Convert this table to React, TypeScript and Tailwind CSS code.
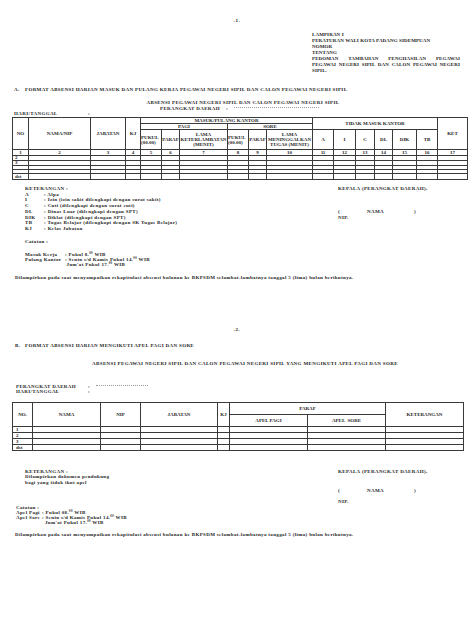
const cell = "border border-[#3a3a3a] p-0 text-center align-middle leading-[5px]";
const thin = "border border-[#3a3a3a] p-0 text-center align-middle leading-[4px]";

const colsA = [16, 62, 35, 15, 21, 18, 48, 21, 18, 46, 21, 22, 19, 18, 24, 21, 30];
const colsB = [20, 68, 40, 77, 12, 78, 78, 78];

const Dots = ({ w }: { w: string }) => (
  <span className={`${w} ml-[6px] inline-block translate-y-[-1px] border-b border-dotted border-[#9a9a9a]`} />
);

const Sup = () => <sup className="text-[3px]">00</sup>;

const TableA = () => (
  <table className="ml-[12px] table-fixed border-collapse border border-[#3a3a3a] tracking-normal">
    <colgroup>
      {colsA.map((w, i) => (
        <col key={i} style={{ width: w }} />
      ))}
    </colgroup>
    <tbody>
      <tr className="h-[6px]">
        <td rowSpan={3} className={cell}>NO</td>
        <td rowSpan={3} className={cell}>NAMA/NIP</td>
        <td rowSpan={3} className={cell}>JABATAN</td>
        <td rowSpan={3} className={cell}>KJ</td>
        <td colSpan={6} className={cell}>MASUK/PULANG KANTOR</td>
        <td colSpan={6} rowSpan={2} className={cell}>TIDAK MASUK KANTOR</td>
        <td rowSpan={3} className={cell}>KET</td>
      </tr>
      <tr className="h-[5px]">
        <td colSpan={3} className={cell}>PAGI</td>
        <td colSpan={3} className={cell}>SORE</td>
      </tr>
      <tr className="h-[20px]">
        <td className={`${cell} text-left`}>PUKUL<br />(00.00)</td>
        <td className={cell}>PARAF</td>
        <td className={cell}>LAMA<br />KETERLAMBATAN<br />(MENIT)</td>
        <td className={`${cell} text-left`}>PUKUL<br />(00.00)</td>
        <td className={cell}>PARAF</td>
        <td className={cell}>LAMA<br />MENINGGALKAN<br />TUGAS (MENIT)</td>
        {["A", "I", "C", "DL", "DIK", "TB"].map((t) => (
          <td key={t} className={cell}>{t}</td>
        ))}
      </tr>
      <tr className="h-[5px]">
        {colsA.map((_, i) => (
          <td key={i} className={cell}>{i + 1}</td>
        ))}
      </tr>
      {["2", "3", "", "", "dst"].map((n, r) => (
        <tr key={r} className={r === 4 ? "h-[6px]" : "h-[4px]"}>
          {colsA.map((_, i) => (
            <td key={i} className={`${thin} ${i === 0 ? "pl-[2px] text-left" : ""}`}>
              {i === 0 ? n : ""}
            </td>
          ))}
        </tr>
      ))}
    </tbody>
  </table>
);

const TableB = () => (
  <table className="ml-[12px] table-fixed border-collapse border border-[#3a3a3a] tracking-normal">
    <colgroup>
      {colsB.map((w, i) => (
        <col key={i} style={{ width: w }} />
      ))}
    </colgroup>
    <tbody>
      <tr className="h-[12px]">
        <td rowSpan={2} className={cell}>NO.</td>
        <td rowSpan={2} className={cell}>NAMA</td>
        <td rowSpan={2} className={cell}>NIP</td>
        <td rowSpan={2} className={cell}>JABATAN</td>
        <td rowSpan={2} className={cell}>KJ</td>
        <td colSpan={2} className={cell}>PARAF</td>
        <td rowSpan={2} className={cell}>KETERANGAN</td>
      </tr>
      <tr className="h-[12px]">
        <td className={cell}>APEL PAGI</td>
        <td className={cell}>APEL &nbsp;SORE</td>
      </tr>
      {["1", "2", "3", "dst"].map((n, r) => (
        <tr key={r} className={r === 3 ? "h-[6px]" : "h-[5px]"}>
          {colsB.map((_, i) => (
            <td key={i} className={`${cell} ${i === 0 ? "pl-[3px] text-left" : ""}`}>
              {i === 0 ? n : ""}
            </td>
          ))}
        </tr>
      ))}
    </tbody>
  </table>
);

const ketA = [
  ["A", "Alpa"],
  ["I", "Izin (izin sakit dilengkapi dengan surat sakit)"],
  ["C", "Cuti (dilengkapi dengan surat cuti)"],
  ["DL", "Dinas Luar (dilengkapi dengan SPT)"],
  ["DIK", "Diklat (dilengkapi dengan SPT)"],
  ["TB", "Tugas Belajar (dilengkapi dengan SK Tugas Belajar)"],
  ["KJ", "Kelas Jabatan"],
];

const Kepala = ({ gapNama, gapNip }: { gapNama: string; gapNip: string }) => (
  <div className="w-[110px] leading-[6px]">
    <div>KEPALA (PERANGKAT DAERAH),</div>
    <div className={`${gapNama} flex`}>
      <span className="w-[29px]">(</span>
      <span className="w-[47px]">NAMA</span>
      <span>)</span>
    </div>
    <div className={gapNip}>NIP.</div>
  </div>
);

const Footnote = ({ mt }: { mt: string }) => (
  <div className={`${mt} pl-[15px] leading-[6px]`}>
    Dilampirkan pada saat menyampaikan rekapitulasi absensi bulanan ke BKPSDM selambat-lambatnya tanggal 5 (lima) bulan berikutnya.
  </div>
);

export default function App() {
  return (
    <div className="h-[632px] w-[474px] overflow-hidden bg-white font-['Liberation_Serif',serif] text-[5px] font-bold tracking-[0.35px] text-[#1e1e1e]">
      {/* halaman 1 */}
      <div className="pt-[18px] text-center leading-[6px]">-1-</div>

      <div className="ml-[312px] mt-[8px] w-[148px] leading-[6px] tracking-[0.1px]">
        <div>LAMPIRAN I</div>
        <div>PERATURAN WALI KOTA PADANG SIDEMPUAN</div>
        <div>NOMOR</div>
        <div>TENTANG</div>
        <div className="text-justify [text-align-last:justify]">PEDOMAN TAMBAHAN PENGHASILAN PEGAWAI</div>
        <div className="whitespace-nowrap text-justify [text-align-last:justify]">PEGAWAI NEGERI SIPIL DAN CALON PEGAWAI NEGERI</div>
        <div>SIPIL.</div>
      </div>

      <div className="mt-[13px] flex pl-[14px] leading-[6px]">
        <span className="w-[11px]">A.</span>
        <span>FORMAT ABSENSI HARIAN MASUK DAN PULANG KERJA PEGAWAI NEGERI SIPIL DAN CALON PEGAWAI NEGERI SIPIL</span>
      </div>

      <div className="mt-[7px] pl-[12px] text-center leading-[6px]">
        ABSENSI PEGAWAI NEGERI SIPIL DAN CALON PEGAWAI NEGERI SIPIL
      </div>
      <div className="ml-[160px] flex items-center leading-[5px]">
        <span className="w-[66px]">PERANGKAT DAERAH</span>
        <span>:</span>
        <Dots w="w-[85px]" />
      </div>
      <div className="flex pl-[14px] leading-[5px]">
        <span className="w-[74px]">HARI/TANGGAL</span>
        <span>:</span>
      </div>

      <div className="mt-[1px]">
        <TableA />
      </div>

      <div className="mt-[6px] flex">
        <div className="ml-[25px] w-[313px] leading-[5.7px]">
          <div>KETERANGAN :</div>
          {ketA.map(([k, v]) => (
            <div key={k} className="flex">
              <span className="w-[19px]">{k}</span>
              <span>: {v}</span>
            </div>
          ))}
          <div className="mt-[7px] leading-[6px]">Catatan :</div>
          <div className="mt-[7px] leading-[5px]">
            <div className="flex">
              <span className="w-[40px]">Masuk Kerja</span>
              <span>: Pukul 8.<Sup /> WIB</span>
            </div>
            <div className="flex">
              <span className="w-[40px]">Pulang Kantor</span>
              <span>: Senin s/d Kamis Pukul 14.<Sup /> WIB</span>
            </div>
            <div className="flex">
              <span className="w-[40px]" />
              <span>&nbsp;Jum'at Pukul 17.<Sup /> WIB</span>
            </div>
          </div>
        </div>
        <Kepala gapNama="mt-[17px]" gapNip="" />
      </div>
      <Footnote mt="mt-[8px]" />

      {/* halaman 2 */}
      <div className="mt-[46px] text-center leading-[6px]">-2-</div>
      <div className="mt-[10px] flex pl-[15px] leading-[6px]">
        <span className="w-[10px]">B.</span>
        <span>FORMAT ABSENSI HARIAN MENGIKUTI APEL PAGI DAN SORE</span>
      </div>
      <div className="mt-[12px] pl-[16px] text-center leading-[6px]">
        ABSENSI PEGAWAI NEGERI SIPIL DAN CALON PEGAWAI NEGERI SIPIL YANG MENGIKUTI APEL PAGI DAN SORE
      </div>
      <div className="mt-[17px] flex items-center pl-[16px] leading-[5px]">
        <span className="w-[72px]">PERANGKAT DAERAH</span>
        <span>:</span>
        <Dots w="w-[52px]" />
      </div>
      <div className="flex pl-[16px] leading-[5px]">
        <span className="w-[72px]">HARI/TANGGAL</span>
        <span>:</span>
      </div>

      <div className="mt-[8px]">
        <TableB />
      </div>

      <div className="mt-[18px] flex">
        <div className="ml-[25px] w-[313px] leading-[5.5px]">
          <div>KETERANGAN :</div>
          <div>Dilampirkan dokumen pendukung</div>
          <div>bagi yang tidak ikut apel</div>
        </div>
        <Kepala gapNama="mt-[13px]" gapNip="mt-[5px]" />
      </div>
      <div className="pl-[16px] leading-[5px]">
        <div>Catatan :</div>
        <div className="flex">
          <span className="w-[26px]">Apel Pagi</span>
          <span>: Pukul 08.<Sup /> WIB</span>
        </div>
        <div className="flex">
          <span className="w-[26px]">Apel Sore</span>
          <span>: Senin s/d Kamis Pukul 14.<Sup /> WIB</span>
        </div>
        <div className="flex">
          <span className="w-[29px]" />
          <span>Jum'at Pukul 17.<Sup /> WIB</span>
        </div>
      </div>
      <Footnote mt="mt-[7px]" />
    </div>
  );
}
